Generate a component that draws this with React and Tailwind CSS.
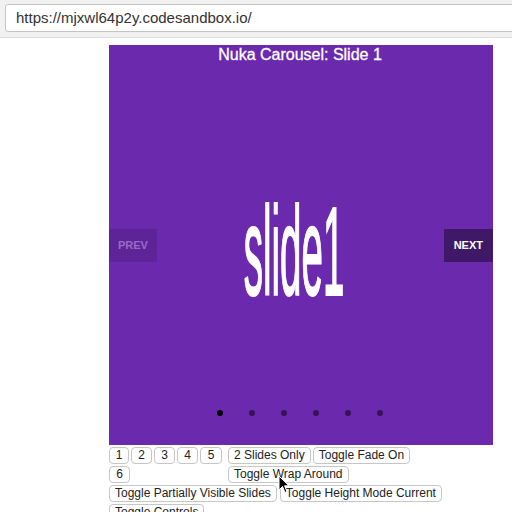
import React from 'react';

const btn =
  'h-[17px] px-[5px] bg-white border border-[#c6c6c6] rounded-[4px] text-[12px] leading-[15px] text-[#222] whitespace-nowrap';

const Dot = ({ active }) => (
  <div className={'w-[6px] h-[6px] rounded-full bg-black ' + (active ? 'opacity-100' : 'opacity-50')} />
);

export default function App() {
  return (
    <div className="relative w-[512px] h-[512px] overflow-hidden bg-white" style={{ fontFamily: '"Liberation Sans", Arial, sans-serif' }}>
      {/* browser bar */}
      <div className="h-[38px] bg-[#f1f1f1] border-b border-[#dcdcdc] pt-[4px] pl-[5px]">
        <div className="h-[28px] w-[520px] bg-white border border-[#c4c4c4] rounded-[3px] pl-[10px] text-[15px] leading-[26px] text-[#333]">
          https://mjxwl64p2y.codesandbox.io/
        </div>
      </div>

      <div className="ml-[109px] mt-[7px] w-[384px]">
        {/* carousel */}
        <div className="relative h-[400px] bg-[#6b29ad] overflow-hidden">
          <div className="text-center text-white text-[16px] leading-[18px] pt-[1px] pr-[2px]" style={{ WebkitTextStroke: '0.3px white' }}>
            Nuka Carousel: Slide 1
          </div>
          <div className="absolute inset-0 flex items-center justify-center pr-[14px] pt-[16px]">
            <div className="text-white text-[38.5px] leading-[38.5px] origin-center" style={{ transform: 'scaleY(3.28)', WebkitTextStroke: '0.6px white' }}>
              slide1
            </div>
          </div>
          <button className="absolute left-0 top-[184px] h-[33px] px-[9px] bg-black/40 text-white text-[11px] font-bold opacity-30">PREV</button>
          <button className="absolute right-0 top-[184px] h-[33px] px-[10px] bg-black/40 text-white text-[11px] font-bold">NEXT</button>
          <div className="absolute left-0 right-0 top-[365px] flex justify-center gap-[26px] pr-[2px]">
            <Dot active />
            <Dot />
            <Dot />
            <Dot />
            <Dot />
            <Dot />
          </div>
        </div>

        {/* controls */}
        <div className="flex pt-[2px]">
          <div className="w-[119px] flex flex-wrap gap-x-[2px] gap-y-[2px] content-start">
            <button className={btn + ' w-[20px] px-0'}>1</button>
            <button className={btn + ' w-[21px] px-0'}>2</button>
            <button className={btn + ' w-[21px] px-0'}>3</button>
            <button className={btn + ' w-[21px] px-0'}>4</button>
            <button className={btn + ' w-[22px] px-0'}>5</button>
            <button className={btn + ' w-[21px] px-0'}>6</button>
          </div>
          <div className="w-[190px] flex flex-wrap gap-x-[2px] gap-y-[2px] content-start">
            <button className={btn}>2 Slides Only</button>
            <button className={btn}>Toggle Fade On</button>
            <button className={btn}>Toggle Wrap Around</button>
          </div>
        </div>
        <div className="flex flex-wrap gap-x-[3px] gap-y-[2px] mt-[2px] w-[384px]">
          <button className={btn}>Toggle Partially Visible Slides</button>
          <button className={btn}>Toggle Height Mode Current</button>
          <button className={btn}>Toggle Controls</button>
        </div>
      </div>

      {/* cursor */}
      <svg className="absolute left-[278px] top-[475px]" width="12" height="19" viewBox="0 0 12 19">
        <path d="M1 1 L1 15 L4.5 11.5 L7 17.5 L9 16.6 L6.6 10.8 L11 10.8 Z" fill="black" stroke="white" strokeWidth="1" strokeLinejoin="round" />
      </svg>
    </div>
  );
}
